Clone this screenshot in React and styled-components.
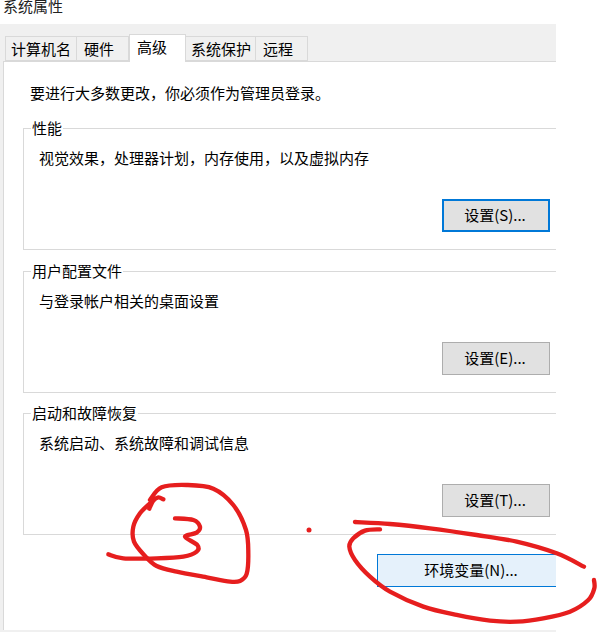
import React from "react";
import styled, { createGlobalStyle } from "styled-components";

const Global = createGlobalStyle`
  html, body { margin: 0; padding: 0; background: #fff; }
  body { font-family: "Noto Sans CJK SC", "Liberation Sans", sans-serif; font-size: 15px; color: #000; }
`;

const Page = styled.div`
  position: relative;
  width: 598px;
  height: 632px;
  overflow: hidden;
`;

const Dialog = styled.div`
  width: 556px;
  height: 632px;
  display: flex;
  flex-direction: column;
  background: #f0f0f0;
`;

const TitleBar = styled.div`
  height: 24px;
  flex: none;
  background: #fff;
  padding-left: 3px;
  line-height: 12px;
  overflow: hidden;
  color: #222;
`;

const TabStrip = styled.div`
  height: 37px;
  flex: none;
  display: flex;
  align-items: flex-end;
  padding-left: 5px;
  position: relative;
  z-index: 1;
`;

const Tab = styled.div`
  width: ${(p) => p.$w}px;
  height: ${(p) => (p.$active ? 28 : 25)}px;
  margin-bottom: ${(p) => (p.$active ? -1 : 0)}px;
  box-sizing: border-box;
  display: flex;
  align-items: center;
  padding-left: ${(p) => p.$pad}px;
  line-height: 1;
  background: ${(p) => (p.$active ? "#fff" : "#f0f0f0")};
  border: 1px solid #d9d9d9;
  border-bottom: ${(p) => (p.$active ? "none" : "1px solid #d9d9d9")};
  border-left: ${(p) => (p.$first || p.$active ? "1px solid #d9d9d9" : "none")};
  padding-bottom: ${(p) => (p.$active ? 5 : 0)}px;
`;

const Panel = styled.div`
  flex: none;
  height: 569px;
  margin-left: 3px;
  box-sizing: border-box;
  background: #fff;
  border-top: 1px solid #d9d9d9;
  border-left: 1px solid #d9d9d9;
  display: flex;
  flex-direction: column;
  padding-left: 19px;
`;

const Notice = styled.div`
  margin: 20px 0 24px 7px;
  height: 22px;
  line-height: 22px;
`;

const Group = styled.section`
  height: 122px;
  flex: none;
  box-sizing: border-box;
  border: 1px solid #d9d9d9;
  border-right: none;
  display: flex;
  flex-direction: column;
  margin-bottom: ${(p) => p.$gap}px;
  padding-right: 6px;
  padding-bottom: 17px;
`;

const Legend = styled.div`
  align-self: flex-start;
  margin: -11px 0 0 7px;
  padding: 0 1px;
  height: 20px;
  line-height: 20px;
  background: #fff;
`;

const Description = styled.div`
  margin: 10px 0 0 15px;
  line-height: 20px;
`;

const Button = styled.div`
  margin-top: auto;
  align-self: flex-end;
  width: 108px;
  height: 33px;
  box-sizing: border-box;
  display: flex;
  align-items: center;
  justify-content: center;
  padding: 0 2px 2px 0;
  background: #e1e1e1;
  border: ${(p) => (p.$focused ? "2px solid #0078d7" : "1px solid #adadad")};
  line-height: 1;
`;

const EnvButton = styled.div`
  align-self: flex-end;
  margin-top: -1px;
  width: 179px;
  height: 33px;
  box-sizing: border-box;
  display: flex;
  align-items: center;
  justify-content: center;
  padding: 0 0 2px 8px;
  background: #e5f1fb;
  border: 1px solid #0078d7;
  border-right: none;
  line-height: 1;
`;

const Scribble = styled.svg`
  position: absolute;
  left: 0;
  top: 0;
  pointer-events: none;
`;

const smooth = (pts) => {
  let d = `M${pts[0][0]},${pts[0][1]}`;
  for (let i = 0; i < pts.length - 1; i++) {
    const p0 = pts[i - 1] || pts[i];
    const p1 = pts[i];
    const p2 = pts[i + 1];
    const p3 = pts[i + 2] || p2;
    d += ` C${p1[0] + (p2[0] - p0[0]) / 6},${p1[1] + (p2[1] - p0[1]) / 6} ${p2[0] - (p3[0] - p1[0]) / 6},${p2[1] - (p3[1] - p1[1]) / 6} ${p2[0]},${p2[1]}`;
  }
  return d;
};

const circleStrokes = [
  [[220, 88], [205, 82], [190, 92], [178, 116]],
  [[180, 90], [215, 52], [290, 45], [370, 56], [430, 105], [468, 180], [475, 250], [470, 312], [450, 333], [420, 335], [350, 322], [260, 305], [200, 288], [165, 258], [132, 215], [130, 170], [150, 130], [180, 100]],
  [[255, 145], [310, 150], [330, 170], [320, 188], [285, 200], [322, 225], [320, 245], [280, 260], [200, 265], [100, 265], [55, 253]],
];

const ovalStrokes = [
  [[195, 66], [300, 72], [420, 85], [560, 105], [680, 125], [800, 160], [882, 200]],
  [[270, 88], [225, 92], [190, 115], [178, 140], [195, 180], [240, 230], [300, 275], [400, 320], [500, 345], [600, 362], [680, 365], [760, 355], [840, 335], [895, 300], [913, 265], [912, 240]],
];

const tabs = [
  { label: "计算机名", w: 72, pad: 5, first: true },
  { label: "硬件", w: 52, pad: 7 },
  { label: "高级", w: 57, pad: 7, active: true },
  { label: "系统保护", w: 70, pad: 5 },
  { label: "远程", w: 52, pad: 7 },
];

const groups = [
  { legend: "性能", text: "视觉效果，处理器计划，内存使用，以及虚拟内存", button: "设置(S)...", focused: true, gap: 21 },
  { legend: "用户配置文件", text: "与登录帐户相关的桌面设置", button: "设置(E)...", gap: 20 },
  { legend: "启动和故障恢复", text: "系统启动、系统故障和调试信息", button: "设置(T)...", gap: 20 },
];

export default function App() {
  return (
    <Page>
      <Global />
      <Dialog>
        <TitleBar>系统属性</TitleBar>
        <TabStrip>
          {tabs.map((t) => (
            <Tab key={t.label} $w={t.w} $pad={t.pad} $active={t.active} $first={t.first}>
              {t.label}
            </Tab>
          ))}
        </TabStrip>
        <Panel>
          <Notice>要进行大多数更改，你必须作为管理员登录。</Notice>
          {groups.map((g) => (
            <Group key={g.legend} $gap={g.gap}>
              <Legend>{g.legend}</Legend>
              <Description>{g.text}</Description>
              <Button $focused={g.focused}>{g.button}</Button>
            </Group>
          ))}
          <EnvButton>环境变量(N)...</EnvButton>
        </Panel>
      </Dialog>
      <Scribble width="598" height="632" viewBox="0 0 598 632" fill="none" stroke="#e61e1e" strokeLinecap="round" strokeLinejoin="round">
        <g transform="translate(90 470) scale(0.3333)" strokeWidth="13">
          {circleStrokes.map((s, i) => <path key={i} d={smooth(s)} />)}
        </g>
        <g transform="translate(290 500) scale(0.3333)" strokeWidth="13">
          {ovalStrokes.map((s, i) => <path key={i} d={smooth(s)} />)}
        </g>
        <circle cx="309" cy="530" r="2.5" fill="#e61e1e" stroke="none" />
      </Scribble>
    </Page>
  );
}
